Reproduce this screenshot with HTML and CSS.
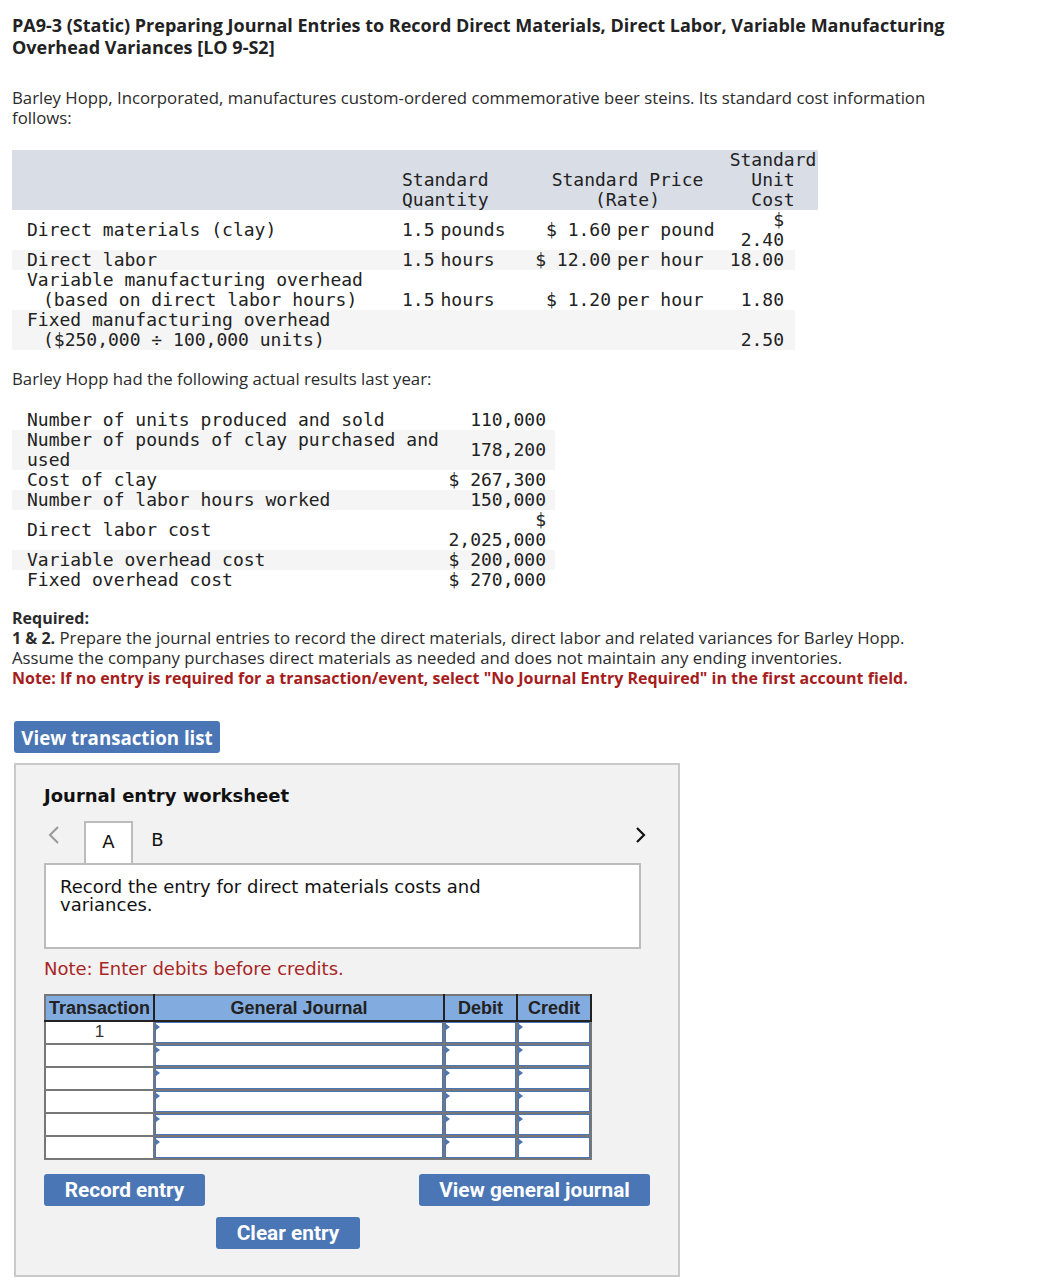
FILE: index.html
```html
<!DOCTYPE html>
<html lang="en">
<head>
  <meta charset="UTF-8" />
  <meta name="viewport" content="width=device-width, initial-scale=1.0" />
  <title>PA9-3 Journal Entries</title>
  <link rel="stylesheet" href="styles.css">
</head>
<body>
  <div class="page">
    <h1 class="title">PA9-3 (Static) Preparing Journal Entries to Record Direct Materials, Direct Labor, Variable Manufacturing Overhead Variances [LO 9-S2]</h1>

    <p class="text intro">Barley Hopp, Incorporated, manufactures custom-ordered commemorative beer steins. Its standard cost information follows:</p>

    <div class="std-table">
      <div class="std-head">
        <div></div>
        <div class="h-qty">Standard<br>Quantity</div>
        <div class="h-price">Standard Price<br>(Rate)</div>
        <div class="h-cost">Standard<br>Unit<br>Cost</div>
      </div>
      <div class="std-row">
        <div class="c1">Direct materials (clay)</div>
        <div class="c2">1.5<span class="unit">pounds</span></div>
        <div class="c3"><span class="amt">$ 1.60</span><span class="unit">per pound</span></div>
        <div class="c4">$ 2.40</div>
      </div>
      <div class="std-row shade">
        <div class="c1">Direct labor</div>
        <div class="c2">1.5<span class="unit">hours</span></div>
        <div class="c3"><span class="amt">$ 12.00</span><span class="unit">per hour</span></div>
        <div class="c4">18.00</div>
      </div>
      <div class="std-row bottom">
        <div class="c1">Variable manufacturing overhead<span class="sub">(based on direct labor hours)</span></div>
        <div class="c2">1.5<span class="unit">hours</span></div>
        <div class="c3"><span class="amt">$ 1.20</span><span class="unit">per hour</span></div>
        <div class="c4">1.80</div>
      </div>
      <div class="std-row shade bottom">
        <div class="c1">Fixed manufacturing overhead<span class="sub">($250,000 ÷ 100,000 units)</span></div>
        <div class="c2"></div>
        <div class="c3"></div>
        <div class="c4">2.50</div>
      </div>
    </div>

    <p class="text actual-lead">Barley Hopp had the following actual results last year:</p>

    <div class="act-table">
      <div class="act-row"><div class="a1">Number of units produced and sold</div><div class="a2">110,000</div></div>
      <div class="act-row shade"><div class="a1">Number of pounds of clay purchased and used</div><div class="a2">178,200</div></div>
      <div class="act-row"><div class="a1">Cost of clay</div><div class="a2">$ 267,300</div></div>
      <div class="act-row shade"><div class="a1">Number of labor hours worked</div><div class="a2">150,000</div></div>
      <div class="act-row"><div class="a1">Direct labor cost</div><div class="a2">$ 2,025,000</div></div>
      <div class="act-row shade"><div class="a1">Variable overhead cost</div><div class="a2">$ 200,000</div></div>
      <div class="act-row"><div class="a1">Fixed overhead cost</div><div class="a2">$ 270,000</div></div>
    </div>

    <div class="text required">
      <p class="req-head">Required:</p>
      <p><strong>1 &amp; 2.</strong> Prepare the journal entries to record the direct materials, direct labor and related variances for Barley Hopp. Assume the company purchases direct materials as needed and does not maintain any ending inventories.</p>
      <p class="warn">Note: If no entry is required for a transaction/event, select "No Journal Entry Required" in the first account field.</p>
    </div>

    <button class="btn btn-list">View transaction list</button>

    <div class="worksheet">
      <h2 class="ws-title">Journal entry worksheet</h2>

      <div class="tabs">
        <span class="chev prev">
          <svg width="12" height="18" viewBox="0 0 12 18"><path d="M10 1 L2 9 L10 17" fill="none" stroke="#999" stroke-width="2"/></svg>
        </span>
        <span class="tab active">A</span>
        <span class="tab">B</span>
        <span class="chev next">
          <svg width="12" height="18" viewBox="0 0 12 18"><path d="M2 2 L9 9 L2 16" fill="none" stroke="#111" stroke-width="2.2"/></svg>
        </span>
      </div>

      <div class="task">
        <p>Record the entry for direct materials costs and variances.</p>
      </div>

      <p class="debit-note">Note: Enter debits before credits.</p>

      <table class="journal">
        <colgroup>
          <col class="w-tr">
          <col class="w-gj">
          <col class="w-dr">
          <col class="w-cr">
        </colgroup>
        <thead>
          <tr>
            <th class="first">Transaction</th>
            <th>General Journal</th>
            <th>Debit</th>
            <th class="last">Credit</th>
          </tr>
        </thead>
        <tbody>
          <tr><td class="tr-no">1</td><td><div class="inp"></div></td><td><div class="inp"></div></td><td><div class="inp"></div></td></tr>
          <tr><td class="tr-no"></td><td><div class="inp"></div></td><td><div class="inp"></div></td><td><div class="inp"></div></td></tr>
          <tr><td class="tr-no"></td><td><div class="inp"></div></td><td><div class="inp"></div></td><td><div class="inp"></div></td></tr>
          <tr><td class="tr-no"></td><td><div class="inp"></div></td><td><div class="inp"></div></td><td><div class="inp"></div></td></tr>
          <tr><td class="tr-no"></td><td><div class="inp"></div></td><td><div class="inp"></div></td><td><div class="inp"></div></td></tr>
          <tr><td class="tr-no"></td><td><div class="inp"></div></td><td><div class="inp"></div></td><td><div class="inp"></div></td></tr>
        </tbody>
      </table>

      <div class="ws-actions">
        <button class="btn btn-ws btn-record">Record entry</button>
        <button class="btn btn-ws btn-gj">View general journal</button>
      </div>
      <div class="ws-actions second">
        <button class="btn btn-ws btn-clear">Clear entry</button>
      </div>
    </div>
  </div>
</body>
</html>
```

FILE: styles.css
```css
body {
  margin: 0;
  padding: 0;
  background: #fff;
  color: #2b2b2b;
  font-family: "Open Sans", Lato, Arial, sans-serif;
}

.page {
  max-width: 945px;
  padding: 14px 12px 6px 12px;
}

.title {
  margin: 0;
  font-size: 18px;
  line-height: 22px;
  font-weight: bold;
  color: #222;
}

.text {
  font-size: 16.75px;
  line-height: 20px;
}

.text strong,
.req-head,
.warn {
  font-size: 16px;
  font-weight: bold;
}

.intro {
  margin: 30px 0 22px 0;
}

/* standard cost table */
.std-table,
.act-table {
  font-family: "DejaVu Sans Mono", monospace;
  font-size: 18px;
  line-height: 20px;
  color: #222;
}

.std-head {
  display: grid;
  grid-template-columns: 383px 130px 197px 96px;
  width: 806px;
  background: #d9dde6;
  align-items: end;
}

.std-row {
  display: grid;
  grid-template-columns: 383px 130px 197px 73px;
  width: 783px;
  align-items: center;
}

.std-row.bottom {
  align-items: end;
}

.shade {
  background: #f5f5f5;
}

.c1 {
  padding-left: 15px;
}

.sub {
  display: block;
  padding-left: 16px;
}

.h-qty,
.c2 {
  padding-left: 7px;
}

.h-price {
  text-align: center;
  padding-left: 8px;
}

.h-cost {
  text-align: center;
  padding-left: 6px;
}

.c3 {
  padding-left: 10px;
  white-space: nowrap;
}

.amt {
  display: inline-block;
  width: 76px;
  text-align: right;
}

.unit {
  margin-left: 6px;
}

.c4 {
  text-align: right;
  padding-right: 11px;
}

.actual-lead {
  margin: 19px 0 21px 0;
  font-size: 16.8px;
}

.act-table {
  width: 543px;
}

.act-row {
  display: grid;
  grid-template-columns: 433px 110px;
  align-items: center;
}

.a1 {
  padding-left: 15px;
}

.a2 {
  text-align: right;
  padding-right: 9px;
}

.required {
  margin-top: 18px;
}

.required p {
  margin: 0;
}

.warn {
  color: #a61d1d;
}

.btn {
  border: none;
  border-radius: 3px;
  background: #4a76b6;
  color: #fff;
  font-weight: bold;
  cursor: pointer;
}

.btn-list {
  display: block;
  margin: 33px 0 0 2px;
  height: 32px;
  width: 206px;
  padding: 0;
  font-family: "Open Sans", sans-serif;
  font-size: 18.7px;
}

/* worksheet panel */
.worksheet {
  margin: 10px 0 0 2px;
  width: 666px;
  height: 514px;
  box-sizing: border-box;
  border: 2px solid #c9c9c9;
  background: #f2f2f2;
  padding: 20px 0 0 28px;
  font-family: "DejaVu Sans", Verdana, sans-serif;
}

.ws-title {
  margin: 0;
  font-size: 18px;
  line-height: 22px;
  color: #111;
}

.tabs {
  display: flex;
  align-items: flex-end;
  width: 597px;
  height: 42px;
  margin-top: 14px;
}

.chev {
  display: flex;
  height: 42px;
  align-items: flex-start;
  padding-top: 5px;
  box-sizing: border-box;
}

.chev.prev {
  width: 40px;
  padding-left: 4px;
}

.chev.next {
  margin-left: auto;
  margin-right: -6px;
}

.tab {
  width: 49px;
  height: 42px;
  box-sizing: border-box;
  text-align: center;
  font-size: 18px;
  line-height: 38px;
  color: #111;
}

.tab.active {
  background: #fff;
  border: 2px solid #bcbcbc;
  border-bottom: none;
}

.task {
  width: 597px;
  height: 86px;
  box-sizing: border-box;
  background: #fff;
  border: 2px solid #bcbcbc;
  padding: 13px 100px 0 14px;
}

.task p {
  margin: 0;
  font-size: 18px;
  line-height: 18px;
  color: #111;
}

.debit-note {
  margin: 10px 0 15px 0;
  font-size: 18px;
  line-height: 20px;
  color: #a82626;
}

/* journal grid */
.journal {
  border-collapse: collapse;
  table-layout: fixed;
  width: 548px;
  border: 2px solid #777;
  font-family: "Liberation Sans", Arial, sans-serif;
}

.w-tr { width: 109px; }
.w-gj { width: 290px; }
.w-dr { width: 73px; }
.w-cr { width: 74px; }

.journal th {
  height: 24px;
  padding: 0;
  background: #82abe0;
  border: 2px solid #222;
  border-top-color: #777;
  font-size: 18px;
  font-weight: bold;
  color: #222;
}

.journal th.first {
  border-left-color: #777;
}

.journal td {
  height: 21px;
  padding: 0;
  border: 2px solid #777;
  background: #fff;
}

.tr-no {
  text-align: center;
  font-size: 17px;
  color: #333;
  vertical-align: top;
  line-height: 20px;
}

.inp {
  position: relative;
  height: 19px;
  border: 1px solid #4a76b6;
  background: #fff;
}

.inp::before {
  content: "";
  position: absolute;
  top: 1px;
  left: 0;
  border-top: 3px solid transparent;
  border-bottom: 3px solid transparent;
  border-left: 4px solid #4a76b6;
}

.ws-actions {
  display: flex;
  justify-content: space-between;
  width: 606px;
  margin-top: 14px;
}

.ws-actions.second {
  margin-top: 11px;
  padding-left: 172px;
}

.btn-ws {
  height: 32px;
  padding: 0;
  font-family: Roboto, sans-serif;
  font-size: 20.8px;
}

.btn-record { width: 161px; }
.btn-gj { width: 231px; }
.btn-clear { width: 144px; }
```
